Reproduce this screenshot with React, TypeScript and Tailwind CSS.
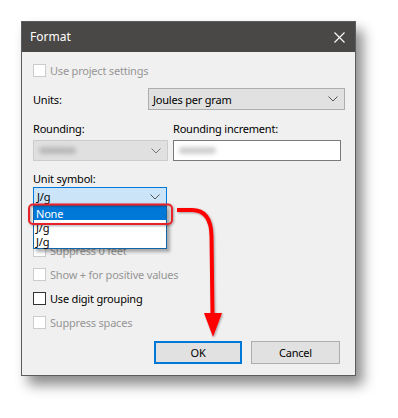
import type { ReactNode } from 'react';

const font = "font-['Segoe_UI','Noto_Sans',sans-serif]";

function Chevron({ color = '#555' }: { color?: string }) {
  return (
    <svg width="10" height="6" viewBox="0 0 10 6" className="shrink-0">
      <path d="M0.5 0.5 L5 5 L9.5 0.5" fill="none" stroke={color} strokeWidth="1" />
    </svg>
  );
}

function Check({ label, enabled = false }: { label: string; enabled?: boolean }) {
  return (
    <div className="flex h-[13px] items-center gap-[4px]">
      <span
        className={
          enabled
            ? 'h-[13px] w-[13px] border border-[#333] bg-white'
            : 'h-[13px] w-[13px] border border-[#cccccc] bg-white'
        }
      />
      <span className={enabled ? 'text-[#000]' : 'text-[#969696]'}>{label}</span>
    </div>
  );
}

function Blob({ tone }: { tone: string }) {
  return <span className={`h-[7px] w-[37px] rounded-full blur-[2px] ${tone}`} />;
}

function Btn({ children, primary = false }: { children: ReactNode; primary?: boolean }) {
  return (
    <button
      className={
        primary
          ? 'flex h-[23px] w-[88px] items-center justify-center border-2 border-[#0078d7] bg-[#e1e1e1]'
          : 'flex h-[23px] w-[89px] items-center justify-center border border-[#adadad] bg-[#e1e1e1]'
      }
    >
      {children}
    </button>
  );
}

export default function App() {
  return (
    <div className={`relative h-[418px] w-[398px] overflow-hidden bg-white text-[11px] leading-none tracking-[-0.2px] text-[#000] ${font}`}>
      <div className="pl-[21px] pt-[21px]">
        {/* dialog */}
        <div className="flex h-[355px] w-[335px] flex-col border border-[#5c5c5c] bg-[#f0f0f0] shadow-[7px_9px_12px_rgba(0,0,0,0.45)]">
          <div className="flex h-[30px] shrink-0 items-center justify-between bg-[#4a4846] pl-[8px] pr-[10px] text-[12px] tracking-normal text-white">
            <span>Format</span>
            <svg width="11" height="11" viewBox="0 0 11 11">
              <path d="M0.5 0.5 L10.5 10.5 M10.5 0.5 L0.5 10.5" stroke="#fff" strokeWidth="1.1" />
            </svg>
          </div>

          <div className="relative flex flex-1 flex-col px-[11px]">
            <div className="mt-[12px]">
              <Check label="Use project settings" />
            </div>

            <div className="mt-[11px] flex items-center justify-between">
              <span>Units:</span>
              <div className="-mr-[1px] flex h-[22px] w-[197px] items-center justify-between border border-[#adadad] bg-[#e1e1e1] pl-[4px] pr-[6px]">
                <span>Joules per gram</span>
                <Chevron />
              </div>
            </div>

            <div className="mt-[12px] grid grid-cols-[135px_168px] gap-x-[5px]">
              <span className="flex h-[13px] items-center">Rounding:</span>
              <span className="flex h-[13px] items-center">Rounding increment:</span>
              <div className="mt-[5px] flex h-[21px] items-center justify-between border border-[#cccccc] bg-[#e0e0e0] pl-[5px] pr-[6px]">
                <Blob tone="bg-[#b9b9b9]" />
                <Chevron color="#777" />
              </div>
              <div className="mt-[5px] flex h-[21px] items-center border border-[#7a7a7a] bg-white pl-[5px]">
                <Blob tone="bg-[#cfcfcf]" />
              </div>
            </div>

            <span className="mt-[11px] flex h-[13px] items-center">Unit symbol:</span>
            <div className="mt-[2px] flex h-[19px] w-[134px] items-center justify-between border border-[#0078d7] bg-[#cce4f7] pl-[3px] pr-[6px]">
              <span>J/g</span>
              <Chevron />
            </div>

            <div className="mt-[38px] flex flex-col gap-[11px]">
              <Check label="Suppress 0 feet" />
              <Check label="Show + for positive values" />
              <Check label="Use digit grouping" enabled />
              <Check label="Suppress spaces" />
            </div>

            <div className="mt-[12px] flex justify-end gap-[9px] pr-[4px]">
              <Btn primary>OK</Btn>
              <Btn>Cancel</Btn>
            </div>

            {/* open dropdown list */}
            <div className="absolute left-[11px] top-[153px] flex w-[134px] flex-col border border-[#1464a8] bg-white shadow-[3px_3px_3px_rgba(0,0,0,0.3)]">
              <span className="flex h-[14px] items-center bg-[#0078d7] pl-[2px] text-white">None</span>
              <span className="flex h-[14px] items-center pl-[2px]">J/g</span>
              <span className="flex h-[14px] items-center pl-[2px]">J/g</span>
            </div>
          </div>
        </div>
      </div>

      {/* annotation */}
      <svg className="pointer-events-none absolute left-0 top-0" width="398" height="418" viewBox="0 0 398 418">
        <defs>
          <filter id="sh" x="-20%" y="-20%" width="140%" height="140%">
            <feDropShadow dx="1" dy="1" stdDeviation="1" floodColor="#000" floodOpacity="0.35" />
          </filter>
        </defs>
        <g filter="url(#sh)">
          <rect x="29" y="204.5" width="143" height="19.5" rx="4" fill="none" stroke="#e8242b" strokeWidth="2" />
          <path d="M177 210 L192 210 Q211 210 211.5 236 L212.5 314" fill="none" stroke="#ff0000" strokeWidth="4" />
          <path d="M204 313 L222 313 L213 337 Z" fill="#ff0000" />
        </g>
      </svg>
    </div>
  );
}
